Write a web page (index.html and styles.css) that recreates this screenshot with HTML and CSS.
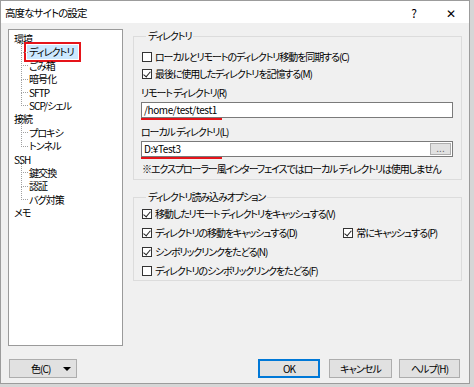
FILE: index.html
```html
<!DOCTYPE html>
<html lang="ja">
<head>
    <meta charset="UTF-8">
    <title>高度なサイトの設定</title>
    <link rel="stylesheet" href="styles.css">
</head>
<body>
    <div class="dialog">
        <div class="titlebar">
            <span class="title">高度なサイトの設定</span>
            <span class="help">?</span>
            <span class="close">✕</span>
        </div>

        <div class="main">
            <div class="tree">
                <div class="node">環境</div>
                <div class="children">
                    <div class="leaf"><span class="selected">ディレクトリ</span></div>
                    <div class="leaf">ごみ箱</div>
                    <div class="leaf">暗号化</div>
                    <div class="leaf">SFTP</div>
                    <div class="leaf">SCP/シェル</div>
                </div>
                <div class="node">接続</div>
                <div class="children">
                    <div class="leaf">プロキシ</div>
                    <div class="leaf">トンネル</div>
                </div>
                <div class="node">SSH</div>
                <div class="children">
                    <div class="leaf">鍵交換</div>
                    <div class="leaf">認証</div>
                    <div class="leaf">バグ対策</div>
                </div>
                <div class="node">メモ</div>
            </div>

            <div class="panel">
                <fieldset class="group group-dir">
                    <legend>ディレクトリ</legend>
                    <label class="check"><span class="box"></span>ローカルとリモートのディレクトリ移動を同期する(C)</label>
                    <label class="check"><span class="box checked"></span>最後に使用したディレクトリを記憶する(M)</label>

                    <div class="field-label">リモート ディレクトリ(R)</div>
                    <div class="textbox">/home/test/test1</div>
                    <div class="mark"></div>

                    <div class="field-label">ローカル ディレクトリ(L)</div>
                    <div class="textbox">D:¥Test3<span class="browse">...</span></div>
                    <div class="mark"></div>

                    <div class="note">※エクスプローラー風インターフェイスではローカル ディレクトリは使用しません</div>
                </fieldset>

                <fieldset class="group group-read">
                    <legend>ディレクトリ読み込みオプション</legend>
                    <label class="check"><span class="box checked"></span>移動したリモート ディレクトリをキャッシュする(V)</label>
                    <div class="check-row">
                        <label class="check"><span class="box checked"></span>ディレクトリの移動をキャッシュする(D)</label>
                        <label class="check always"><span class="box checked"></span>常にキャッシュする(P)</label>
                    </div>
                    <label class="check"><span class="box checked"></span>シンボリックリンクをたどる(N)</label>
                    <label class="check"><span class="box"></span>ディレクトリのシンボリックリンクをたどる(F)</label>
                </fieldset>
            </div>
        </div>

        <div class="footer">
            <button class="btn btn-color">色(C)<span class="arrow"></span></button>
            <div class="actions">
                <button class="btn btn-default">OK</button>
                <button class="btn btn-cancel">キャンセル</button>
                <button class="btn btn-help">ヘルプ(H)</button>
            </div>
        </div>
    </div>
</body>
</html>
```

FILE: styles.css
```css
* {
    margin: 0;
    padding: 0;
    box-sizing: border-box;
    font-family: "Noto Sans CJK JP", "Noto Sans", sans-serif;
    font-feature-settings: "palt";
}

body {
    background-color: #d6d6d6;
    font-size: 10px;
    letter-spacing: -1.1px;
    color: #000;
}

.dialog {
    width: 470px;
    height: 384px;
    background-color: #f0f0f0;
    border: 1px solid #9c9c9c;
    display: flex;
    flex-direction: column;
}

.titlebar {
    height: 22px;
    background-color: #fff;
    display: flex;
    align-items: center;
    padding-left: 4px;
    font-size: 10.5px;
    letter-spacing: -0.9px;
}

.title {
    flex: 1;
}

.help {
    width: 38px;
    text-align: center;
    font-size: 12px;
    letter-spacing: 0;
}

.close {
    width: 36px;
    text-align: center;
    font-size: 12px;
    letter-spacing: 0;
}

.main {
    display: flex;
    padding: 6px 0 0 7px;
    height: 323px;
}

/* tree */

.tree {
    width: 115px;
    height: 317px;
    background-color: #fff;
    border: 1px solid #9a9a9a;
    padding: 2px 0 0 5px;
    line-height: 13.4px;
    letter-spacing: -0.9px;
}

.children {
    padding-left: 15px;
}

.leaf {
    position: relative;
}

.leaf::before {
    content: "";
    position: absolute;
    left: -8px;
    top: -7px;
    width: 6px;
    height: 13.4px;
    border-left: 1px dotted #a0a0a0;
    border-bottom: 1px dotted #a0a0a0;
}

.selected {
    display: inline-block;
    background-color: #cce8ff;
    padding: 0 4px 0 2px;
    margin-left: -2px;
    outline: 2px solid #e5141a;
    outline-offset: 1px;
}

/* right side */

.panel {
    width: 329px;
    margin-left: 10px;
    display: flex;
    flex-direction: column;
}

.group {
    border: 1px solid #dcdcdc;
    padding: 0 8px 0 8px;
    min-width: 0;
}

.group legend {
    margin-left: 4px;
    padding: 0 2px;
    line-height: 14px;
}

.group-dir {
    height: 151px;
    padding-top: 5px;
}

.group-read {
    margin-top: 10px;
    height: 91px;
    padding-top: 0;
}

.check {
    display: flex;
    align-items: center;
    height: 17px;
    white-space: nowrap;
}

.group-read .check {
    height: 19px;
}

.check-row {
    display: flex;
}

.always {
    margin-left: auto;
    margin-right: 16px;
}

.box {
    width: 10px;
    height: 10px;
    border: 1px solid #333;
    background-color: #fff;
    margin-right: 3px;
    flex-shrink: 0;
    position: relative;
}

.box.checked::after {
    content: "";
    position: absolute;
    left: 2px;
    top: 0px;
    width: 3px;
    height: 6px;
    border-right: 1px solid #222;
    border-bottom: 1px solid #222;
    transform: rotate(40deg);
}

.field-label {
    height: 18px;
    line-height: 18px;
    margin-top: 2px;
    margin-left: -1px;
}

.mark + .field-label {
    margin-top: 3px;
}

.textbox {
    height: 16px;
    margin-left: -1px;
    border: 1px solid #7a7a7a;
    background-color: #fff;
    padding-left: 2px;
    line-height: 14px;
    letter-spacing: -0.4px;
    display: flex;
    align-items: center;
    justify-content: space-between;
}

.browse {
    width: 21px;
    height: 12px;
    margin-right: 1px;
    background-color: #e1e1e1;
    border: 1px solid #adadad;
    color: #6d6d6d;
    text-align: center;
    line-height: 8px;
    font-size: 10px;
    letter-spacing: 0;
}

.mark {
    width: 81px;
    height: 2px;
    margin-left: -1px;
    background-color: #e5141a;
}

.note {
    margin-top: 3px;
    line-height: 14px;
    white-space: nowrap;
}

/* footer */

.footer {
    display: flex;
    align-items: center;
    padding: 13px 9px 0 8px;
}

.btn {
    height: 19px;
    background-color: #e1e1e1;
    border: 1px solid #adadad;
    font-size: 10px;
    letter-spacing: -0.9px;
    color: #000;
}

.btn-color {
    width: 68px;
    display: flex;
    align-items: center;
    justify-content: space-between;
    padding: 0 5px 0 21px;
}

.arrow {
    width: 0;
    height: 0;
    border-left: 4px solid transparent;
    border-right: 4px solid transparent;
    border-top: 4px solid #000;
}

.actions {
    margin-left: auto;
    display: flex;
}

.btn-default {
    width: 62px;
    border: 2px solid #0078d7;
}

.btn-cancel {
    width: 63px;
    margin-left: 9px;
}

.btn-help {
    width: 61px;
    margin-left: 7px;
}
```
